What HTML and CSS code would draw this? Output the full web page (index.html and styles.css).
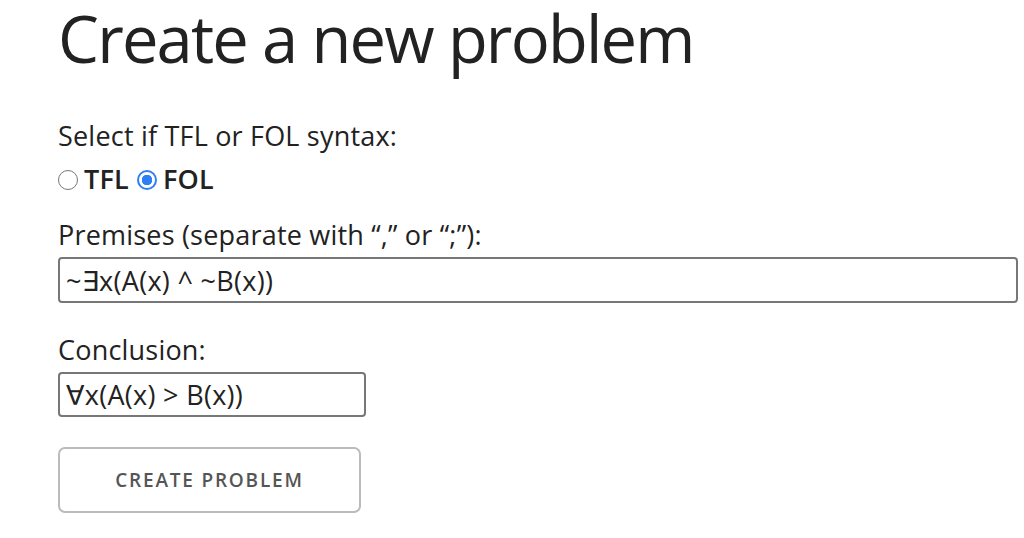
FILE: index.html
```html
<!DOCTYPE html>
<html lang="en">
<head>
<meta charset="utf-8">
<title>Create a new problem</title>
<link rel="stylesheet" href="styles.css">
</head>
<body>
<main class="page">
  <h1 class="title">Create a new problem</h1>
  <form class="form">
    <div class="label">Select if TFL or FOL syntax:</div>
    <div class="radios">
      <label class="radio-opt"><input type="radio" name="syntax" class="radio"><span>TFL</span></label>
      <label class="radio-opt"><input type="radio" name="syntax" class="radio" checked><span>FOL</span></label>
    </div>
    <div class="label label-premises">Premises (separate with “,” or “;”):</div>
    <input class="field field-wide" type="text" value="~∃x(A(x) ^ ~B(x))">
    <div class="label label-conclusion">Conclusion:</div>
    <input class="field field-short" type="text" value="∀x(A(x) &gt; B(x))">
    <div class="actions">
      <button class="btn" type="button">Create problem</button>
    </div>
  </form>
</main>
</body>
</html>
```

FILE: styles.css
```css
html, body {
  margin: 0;
  padding: 0;
  background: #fff;
}
body {
  font-family: "Open Sans", "Noto Sans", sans-serif;
  color: #222;
  font-size: 27px;
  letter-spacing: 0.2px;
}
.page {
  padding-left: 58px;
  padding-top: 2px;
  width: 960px;
}
.title {
  margin: 0;
  font-size: 65px;
  font-weight: 400;
  line-height: 72px;
  letter-spacing: -1.8px;
}
.form {
  margin: 44px 0 0;
  display: flex;
  flex-direction: column;
  align-items: flex-start;
}
.label {
  line-height: 36px;
}
.radios {
  display: flex;
  gap: 8px;
  margin-top: 7px;
  line-height: 36px;
}
.radio-opt {
  display: flex;
  align-items: center;
  gap: 6px;
  font-weight: 600;
}
.radio {
  appearance: none;
  -webkit-appearance: none;
  margin: 0;
  width: 20px;
  height: 20px;
  border: 1.5px solid #767676;
  border-radius: 50%;
  background: #fff;
  box-sizing: border-box;
  position: relative;
  top: 1px;
}
.radio:checked {
  border: 2px solid #2e7ff6;
  background: radial-gradient(circle, #2e7ff6 0 5px, #fff 5.5px);
}
.label-premises {
  margin-top: 20px;
}
.field {
  margin-top: 4px;
  box-sizing: border-box;
  height: 46px;
  border: 2px solid #777;
  border-radius: 4px;
  padding: 0 6px;
  font-family: "Open Sans", "DejaVu Sans", sans-serif;
  font-size: 27px;
  letter-spacing: 0.3px;
  color: #222;
  background: #fff;
  outline: none;
}
.field-wide {
  width: 960px;
}
.field-short {
  width: 308px;
  height: 45px;
  margin-top: 4px;
}
.label-conclusion {
  margin-top: 29px;
}
.actions {
  margin-top: 30px;
}
.btn {
  box-sizing: border-box;
  width: 303px;
  height: 66px;
  border: 2px solid #bbb;
  border-radius: 7px;
  background: #fff;
  color: #555;
  font-family: "Open Sans", sans-serif;
  font-size: 19px;
  font-weight: 600;
  letter-spacing: 1.8px;
  text-transform: uppercase;
  cursor: pointer;
  padding: 0;
}
```
